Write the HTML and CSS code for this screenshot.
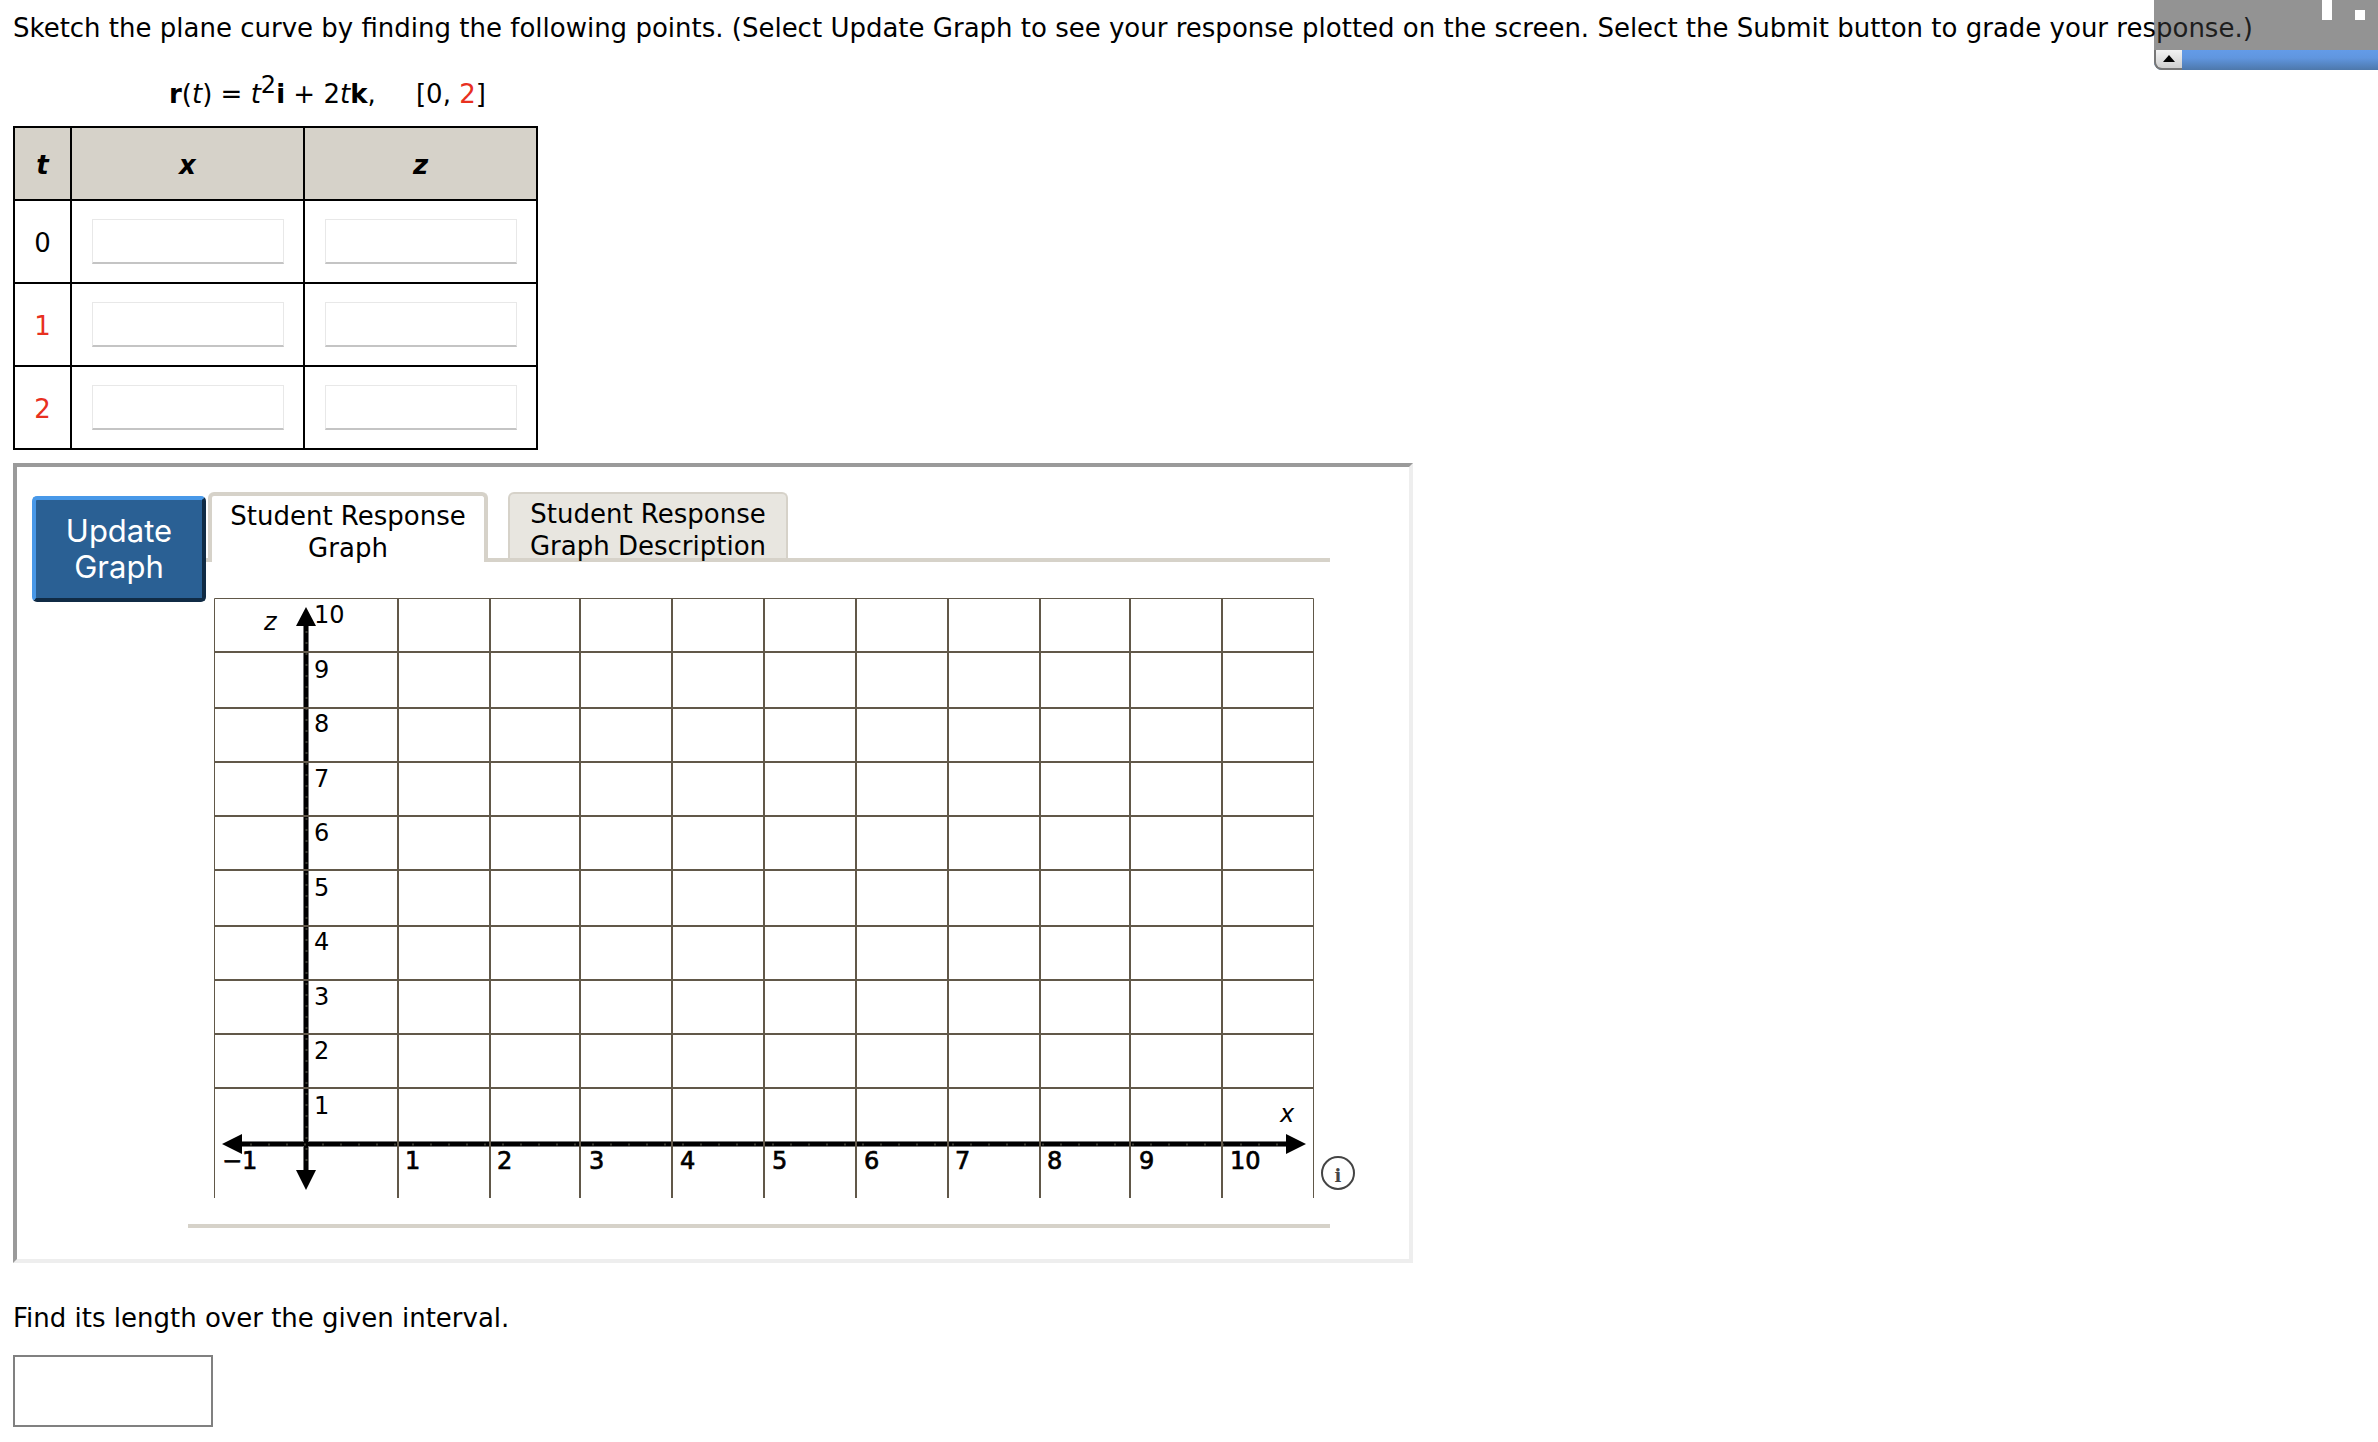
FILE: index.html
```html
<!DOCTYPE html>
<html lang="en">
<head>
    <meta charset="UTF-8">
    <meta name="viewport" content="width=device-width, initial-scale=1.0">
    <title>Sketch the plane curve</title>
    <link rel="stylesheet" href="styles.css">
</head>
<body>
    <main class="question">
        <p class="prompt">Sketch the plane curve by finding the following points. (Select Update Graph to see your response plotted on the screen. Select the Submit button to grade your response.)</p>

        <div class="formula"><b>r</b>(<i>t</i>) = <i>t</i><sup>2</sup><b>i</b> + 2<i>t</i><b>k</b>, <span class="interval">[0, <span class="random">2</span>]</span></div>

        <table class="points">
            <thead>
                <tr>
                    <th class="t-col" scope="col">t</th>
                    <th scope="col">x</th>
                    <th scope="col">z</th>
                </tr>
            </thead>
            <tbody>
                <tr>
                    <td class="t-value">0</td>
                    <td><input type="text" class="point-input" aria-label="x at t = 0"></td>
                    <td><input type="text" class="point-input" aria-label="z at t = 0"></td>
                </tr>
                <tr>
                    <td class="t-value random">1</td>
                    <td><input type="text" class="point-input" aria-label="x at t = 1"></td>
                    <td><input type="text" class="point-input" aria-label="z at t = 1"></td>
                </tr>
                <tr>
                    <td class="t-value random">2</td>
                    <td><input type="text" class="point-input" aria-label="x at t = 2"></td>
                    <td><input type="text" class="point-input" aria-label="z at t = 2"></td>
                </tr>
            </tbody>
        </table>

        <section class="graph-frame">
            <button type="button" class="update-button">Update Graph</button>

            <div class="graph-panel">
                <div class="tabs" role="tablist">
                    <button type="button" class="tab active" role="tab" aria-selected="true">Student Response Graph</button>
                    <button type="button" class="tab" role="tab" aria-selected="false">Student Response Graph Description</button>
                </div>

                <div class="graph-row">
                    <svg class="graph" viewBox="0 0 1100 600" role="img" aria-label="Empty graph of z against x">
                        <!-- axes -->
                        <g class="axis-edge">
                            <path d="M26 546H1074M92 28V573"/>
                        </g>
                        <g class="axis">
                            <path d="M26 546H1074M92 28V573"/>
                        </g>
                        <path class="axis-ticks" d="M18 546.5H1086"/>
                        <path class="axis-ticks vertical" d="M92.5 22V582"/>
                        <path d="M8 546L28 536V556ZM1092 546L1072 536V556ZM92 9L82 28H102ZM92 592L82 572H102Z"/>

                        <!-- grid -->
                        <path class="grid" d="M184 0V600M276 0V600M366 0V600M458 0V600M550 0V600M642 0V600M734 0V600M826 0V600M916 0V600M1008 0V600"/>
                        <path class="grid" d="M0 54H1100M0 110H1100M0 164H1100M0 218H1100M0 272H1100M0 328H1100M0 382H1100M0 436H1100M0 490H1100"/>
                        <path class="grid-edge" d="M0.5 600V0.5H1099.5V600"/>

                        <g class="z-labels">
                            <text x="100" y="25">10</text>
                            <text x="100" y="80">9</text>
                            <text x="100" y="134">8</text>
                            <text x="100" y="189">7</text>
                            <text x="100" y="243">6</text>
                            <text x="100" y="298">5</text>
                            <text x="100" y="352">4</text>
                            <text x="100" y="407">3</text>
                            <text x="100" y="461">2</text>
                            <text x="100" y="516">1</text>
                        </g>
                        <g class="x-labels">
                            <text x="8" y="571">−1</text>
                            <text x="191" y="571">1</text>
                            <text x="283" y="571">2</text>
                            <text x="375" y="571">3</text>
                            <text x="466" y="571">4</text>
                            <text x="558" y="571">5</text>
                            <text x="650" y="571">6</text>
                            <text x="741" y="571">7</text>
                            <text x="833" y="571">8</text>
                            <text x="925" y="571">9</text>
                            <text x="1016" y="571">10</text>
                        </g>
                        <g class="axis-names">
                            <text x="50" y="32">z</text>
                            <text x="1066" y="524">x</text>
                        </g>
                    </svg>
                    <button type="button" class="info-button">i</button>
                </div>
            </div>
        </section>

        <label class="length-label" for="curveLength">Find its length over the given interval.</label>
        <input type="text" class="length-input" id="curveLength">
    </main>

    <aside class="widget">
        <div class="widget-screen">
            <svg class="widget-marks" viewBox="0 0 56 20" aria-hidden="true">
                <path d="M0 0H10V20H0ZM33 10H43V20H33Z" fill="#fff"/>
            </svg>
        </div>
        <div class="widget-bar">
            <button type="button" class="widget-toggle" aria-label="Collapse">
                <svg viewBox="0 0 12 8" aria-hidden="true"><path d="M6 0L12 7H0Z"/></svg>
            </button>
        </div>
    </aside>
</body>
</html>
```

FILE: styles.css
```css
* {
    box-sizing: border-box;
}

body {
    margin: 0;
    background: #fff;
    color: #000;
    font-family: Verdana, "DejaVu Sans", sans-serif;
    font-size: 26px;
    line-height: 32px;
    overflow-x: hidden;
}

button,
input {
    font: inherit;
}

.question {
    padding: 12px 13px;
}

.prompt {
    margin: 0;
}

.formula {
    margin: 34px 0 16px;
    padding-left: 156px;
}

.formula sup {
    font-size: 24px;
    line-height: 0;
    vertical-align: 10px;
}

.interval {
    padding-left: 32px;
}

.random {
    color: #e8301f;
}

/* Points table */
.points {
    border-collapse: collapse;
    text-align: center;
}

.points th,
.points td {
    border: 2px solid #000;
    padding: 0;
    height: 83px;
}

.points th {
    width: 233px;
    height: 73px;
    padding-top: 2px;
    background: #d6d2c9;
    font-style: italic;
}

.points .t-col {
    width: 57px;
}

.points .t-value {
    padding-top: 2px;
}

.point-input {
    display: block;
    width: 192px;
    height: 45px;
    margin: 0 auto;
    border: 1px solid #e8e8e8;
    border-bottom: 2px solid #c4c4c4;
    background: #fff;
}

/* Graph */
.graph-frame {
    display: flex;
    align-items: flex-start;
    max-width: 1400px;
    margin-top: 13px;
    padding: 25px 79px 31px 15px;
    border: 4px solid;
    border-color: #9a9a9a #eee #eee #9a9a9a;
}

.update-button {
    flex: none;
    width: 174px;
    height: 106px;
    margin: 4px -18px 0 0;
    padding: 0 20px;
    border: 4px solid;
    border-color: #4898e8 #102b45 #102b45 #4898e8;
    border-radius: 5px;
    background: #2a6094;
    color: #fff;
    font-family: Inter, sans-serif;
    font-size: 31px;
    line-height: 36px;
    z-index: 1;
}

.graph-panel {
    flex: 1;
    min-width: 0;
    border-bottom: 4px solid #d6d2c9;
}

.tabs {
    display: flex;
    gap: 20px;
    height: 70px;
    padding-left: 20px;
    border-bottom: 4px solid #d6d2c9;
}

.tab {
    width: 280px;
    height: 66px;
    padding: 4px 10px 0;
    border: 2px solid #d6d2c9;
    border-bottom: 0;
    border-radius: 6px 6px 0 0;
    background: #e8e6e0;
    color: #000;
    line-height: 32px;
}

.tab.active {
    height: 70px;
    border-width: 4px;
    border-bottom: 0;
    background: #fff;
}

.graph-row {
    display: flex;
    align-items: flex-end;
    gap: 7px;
    margin-right: -25px;
    padding: 36px 0 26px 26px;
}

.graph {
    flex: 1;
    min-width: 0;
    font-size: 24px;
}

.axis {
    stroke: #000;
    stroke-width: 4;
}

.axis-edge {
    stroke: #777;
    stroke-width: 6;
}

.axis-ticks {
    stroke: #3a3a30;
    stroke-width: 2;
    stroke-dasharray: 2 16;
}

.axis-ticks.vertical {
    stroke-dasharray: 2 9;
}

.grid {
    stroke: #615849;
    stroke-width: 2;
}

.grid-edge {
    fill: none;
    stroke: #615849;
    stroke-width: 1;
}

.x-labels {
    stroke: #000;
    stroke-width: 0.7;
}

.axis-names {
    font-style: italic;
}

.info-button {
    flex: none;
    width: 34px;
    height: 34px;
    margin-bottom: 8px;
    padding: 6px 0 0;
    border: 2px solid #444;
    border-radius: 50%;
    background: #fff;
    color: #444;
    font-family: "DejaVu Serif", serif;
    font-size: 18px;
    font-weight: bold;
    line-height: 20px;
}

/* Length answer */
.length-label {
    display: block;
    margin: 39px 0 21px;
}

.length-input {
    display: block;
    width: 200px;
    height: 72px;
    border: 2px solid #808080;
    background: #fff;
}

/* Floating widget in the top right corner */
.widget {
    position: absolute;
    top: 0;
    right: 0;
    width: 224px;
}

.widget-screen {
    display: flex;
    justify-content: flex-end;
    height: 50px;
    background: rgba(55, 55, 55, 0.54);
}

.widget-marks {
    width: 56px;
    height: 20px;
}

.widget-bar {
    display: flex;
    height: 20px;
    border-radius: 0 0 0 8px;
    background: linear-gradient(#639be8, #6096df 40%, #4d78ab);
}

.widget-toggle {
    display: flex;
    align-items: center;
    justify-content: center;
    width: 28px;
    height: 20px;
    padding: 0;
    border: 0 solid #777;
    border-width: 0 0 2px 2px;
    border-radius: 0 0 0 8px;
    background: linear-gradient(#f2f2f2, #cfcfcf);
}

.widget-toggle svg {
    width: 12px;
    height: 8px;
}
```
